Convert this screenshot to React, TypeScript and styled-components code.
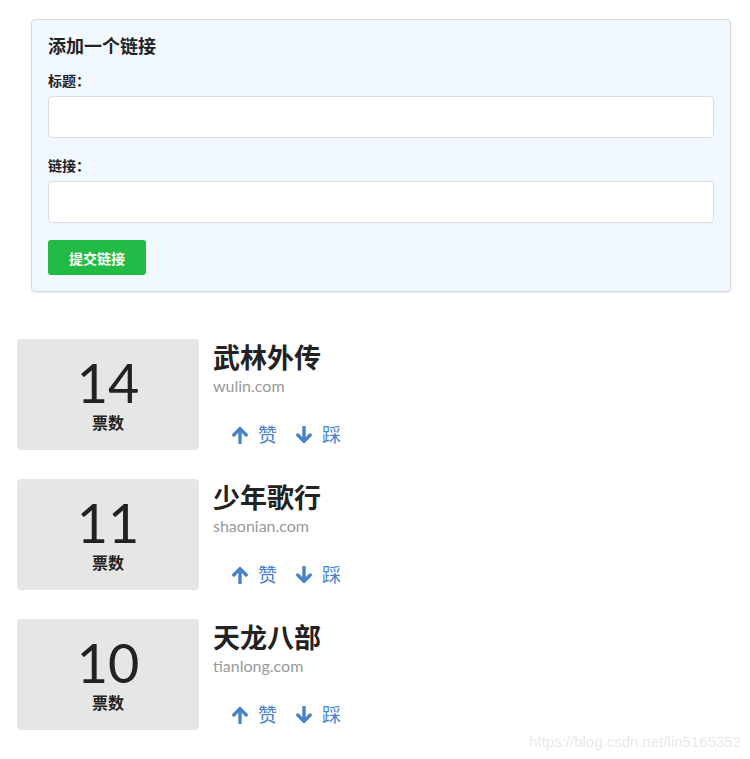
import React from "react";
import styled, { createGlobalStyle } from "styled-components";

const GlobalStyle = createGlobalStyle`
  html, body {
    margin: 0;
    padding: 0;
    background: #fff;
    font-family: Lato, "Noto Sans CJK SC", sans-serif;
    color: #222;
  }
  * { box-sizing: border-box; }
`;

interface Link {
  title: string;
  url: string;
  votes: number;
}

const links: Link[] = [
  { title: "武林外传", url: "wulin.com", votes: 14 },
  { title: "少年歌行", url: "shaonian.com", votes: 11 },
  { title: "天龙八部", url: "tianlong.com", votes: 10 },
];

const Page = styled.div`
  padding: 19px 17px 0 17px;
  display: flex;
  flex-direction: column;
`;

const FormPanel = styled.form`
  margin-left: 14px;
  width: 700px;
  height: 273px;
  padding: 13px 16px 16px 16px;
  background: #f1f8ff;
  border: 1px solid #d5dae0;
  border-radius: 4px;
  box-shadow: 0 1px 2px rgba(0, 0, 0, 0.08);
  display: flex;
  flex-direction: column;
`;

const FormTitle = styled.h3`
  margin: 0;
  font-size: 18px;
  font-weight: 700;
  line-height: 26px;
  color: #222;
`;

const Field = styled.div<{ $top: number }>`
  display: flex;
  flex-direction: column;
  margin-top: ${(p) => p.$top}px;
`;

const Label = styled.label`
  font-size: 14px;
  font-weight: 700;
  line-height: 20px;
  color: #222;
`;

const Input = styled.input`
  margin-top: 5px;
  height: 42px;
  width: 666px;
  border: 1px solid #dadde1;
  border-radius: 4px;
  background: #fff;
  outline: none;
`;

const SubmitButton = styled.button`
  margin-top: 17px;
  width: 98px;
  height: 35px;
  border: none;
  border-radius: 3px;
  background: #22bb45;
  color: #fff;
  font-family: Lato, "Noto Sans CJK SC", sans-serif;
  font-size: 14px;
  font-weight: 700;
`;

const LinkList = styled.div`
  margin-top: 47px;
  display: flex;
  flex-direction: column;
  gap: 29px;
`;

const LinkRow = styled.div`
  display: flex;
  align-items: flex-start;
  gap: 14px;
`;

const VoteBox = styled.div`
  width: 182px;
  height: 111px;
  background: #e6e6e6;
  border-radius: 4px;
  display: flex;
  flex-direction: column;
  align-items: center;
  padding-top: 17px;
`;

const VoteCount = styled.div`
  font-size: 54px;
  line-height: 54px;
  color: #222;
`;

const VoteLabel = styled.div`
  font-size: 16px;
  font-weight: 700;
  line-height: 16px;
  margin-top: 5px;
`;

const LinkBody = styled.div`
  display: flex;
  flex-direction: column;
  padding-top: 2px;
`;

const LinkTitle = styled.div`
  font-size: 27px;
  font-weight: 700;
  line-height: 34px;
  color: #222;
`;

const LinkUrl = styled.div`
  font-size: 16px;
  line-height: 20px;
  color: #999;
  margin-top: 1px;
`;

const Actions = styled.div`
  display: flex;
  gap: 19px;
  margin-top: 28px;
  padding-left: 19px;
`;

const ActionLink = styled.a`
  display: flex;
  align-items: center;
  gap: 10px;
  font-size: 19px;
  line-height: 22px;
  color: #4a84c8;
  text-decoration: none;
  cursor: pointer;
`;

const Watermark = styled.div`
  position: fixed;
  right: 9px;
  bottom: 9px;
  font-family: "Liberation Sans", Arial, sans-serif;
  font-size: 15px;
  color: #e8e8e8;
`;

const Arrow = ({ down }: { down?: boolean }) => (
  <svg
    width="16"
    height="18"
    viewBox="0 0 16 18"
    style={down ? { transform: "rotate(180deg)" } : undefined}
  >
    <path
      d="M8 17V3M1.8 9L8 2.6L14.2 9"
      fill="none"
      stroke="currentColor"
      strokeWidth="3.4"
      strokeLinecap="round"
      strokeLinejoin="round"
    />
  </svg>
);

export default function App() {
  return (
    <>
      <GlobalStyle />
      <Page>
        <FormPanel onSubmit={(e) => e.preventDefault()}>
          <FormTitle>添加一个链接</FormTitle>
          <Field $top={12}>
            <Label>标题：</Label>
            <Input />
          </Field>
          <Field $top={18}>
            <Label>链接：</Label>
            <Input />
          </Field>
          <div>
            <SubmitButton type="submit">提交链接</SubmitButton>
          </div>
        </FormPanel>
        <LinkList>
          {links.map((link) => (
            <LinkRow key={link.url}>
              <VoteBox>
                <VoteCount>{link.votes}</VoteCount>
                <VoteLabel>票数</VoteLabel>
              </VoteBox>
              <LinkBody>
                <LinkTitle>{link.title}</LinkTitle>
                <LinkUrl>{link.url}</LinkUrl>
                <Actions>
                  <ActionLink>
                    <Arrow />
                    赞
                  </ActionLink>
                  <ActionLink>
                    <Arrow down />
                    踩
                  </ActionLink>
                </Actions>
              </LinkBody>
            </LinkRow>
          ))}
        </LinkList>
      </Page>
      <Watermark>https://blog.csdn.net/lin5165352</Watermark>
    </>
  );
}
